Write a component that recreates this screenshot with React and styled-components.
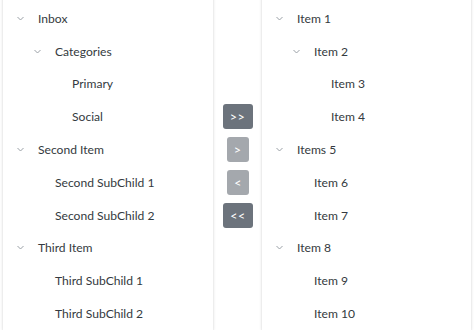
import React from "react";
import styled, { createGlobalStyle } from "styled-components";

const Global = createGlobalStyle`
  html, body { margin: 0; padding: 0; background: #fff; overflow: hidden; }
  body { font-family: "Segoe UI", "Lato", "Noto Sans", sans-serif; }
`;

const Layout = styled.div`
  display: flex;
  align-items: stretch;
  margin-top: -5px;
  padding-left: 3px;
  height: 335px;
`;

const Panel = styled.div`
  width: ${(p) => p.$w}px;
  background: #fff;
  box-shadow: 0 1px 3px rgba(0, 0, 0, 0.16), 0 0 1px rgba(0, 0, 0, 0.08);
  padding-top: 7px;
  box-sizing: border-box;
`;

const Middle = styled.div`
  width: 49px;
  display: flex;
  flex-direction: column;
  align-items: center;
  justify-content: flex-start;
  padding-top: 109px;
  gap: 8px;
  box-sizing: border-box;
`;

const MoveButton = styled.button`
  width: ${(p) => (p.$wide ? 30 : 22)}px;
  height: 25px;
  padding: 0;
  border: none;
  border-radius: 3px;
  background: ${(p) => (p.$disabled ? "#a4a8ad" : "#6c737c")};
  color: #fff;
  font-family: "Noto Sans", sans-serif;
  font-size: 10px;
  font-weight: 600;
  letter-spacing: ${(p) => (p.$wide ? "2px" : "0")};
  text-indent: ${(p) => (p.$wide ? "2px" : "0")};
  display: flex;
  align-items: center;
  justify-content: center;
`;

const List = styled.ul`
  list-style: none;
  margin: 0;
  padding: 0;
`;

const Row = styled.li`
  height: 32.8px;
  display: flex;
  align-items: center;
  padding-left: ${(p) => 5 + p.$level * 17}px;
  font-size: 12.1px;
  color: #343a40;
  font-family: "Lato", "Noto Sans", sans-serif;
`;

const Toggle = styled.span`
  width: 24px;
  height: 12px;
  margin-right: 6px;
  display: flex;
  align-items: center;
  justify-content: center;
  flex: none;
`;

const Chevron = () => (
  <svg width="7" height="5" viewBox="0 0 7 5">
    <path d="M0.5 1 L3.5 4 L6.5 1" fill="none" stroke="#9aa0a6" strokeWidth="1" />
  </svg>
);

const leftItems = [
  ["Inbox", 0, true],
  ["Categories", 1, true],
  ["Primary", 2, false],
  ["Social", 2, false],
  ["Second Item", 0, true],
  ["Second SubChild 1", 1, false],
  ["Second SubChild 2", 1, false],
  ["Third Item", 0, true],
  ["Third SubChild 1", 1, false],
  ["Third SubChild 2", 1, false],
];

const rightItems = [
  ["Item 1", 0, true],
  ["Item 2", 1, true],
  ["Item 3", 2, false],
  ["Item 4", 2, false],
  ["Items 5", 0, true],
  ["Item 6", 1, false],
  ["Item 7", 1, false],
  ["Item 8", 0, true],
  ["Item 9", 1, false],
  ["Item 10", 1, false],
];

const Tree = ({ items }) => (
  <List>
    {items.map(([label, level, parent]) => (
      <Row key={label} $level={level}>
        <Toggle>{parent && <Chevron />}</Toggle>
        {label}
      </Row>
    ))}
  </List>
);

export default function App() {
  return (
    <>
      <Global />
      <Layout>
        <Panel $w={210}>
          <Tree items={leftItems} />
        </Panel>
        <Middle>
          <MoveButton $wide>&gt;&gt;</MoveButton>
          <MoveButton $disabled>&gt;</MoveButton>
          <MoveButton $disabled>&lt;</MoveButton>
          <MoveButton $wide>&lt;&lt;</MoveButton>
        </Middle>
        <Panel $w={209}>
          <Tree items={rightItems} />
        </Panel>
      </Layout>
    </>
  );
}
